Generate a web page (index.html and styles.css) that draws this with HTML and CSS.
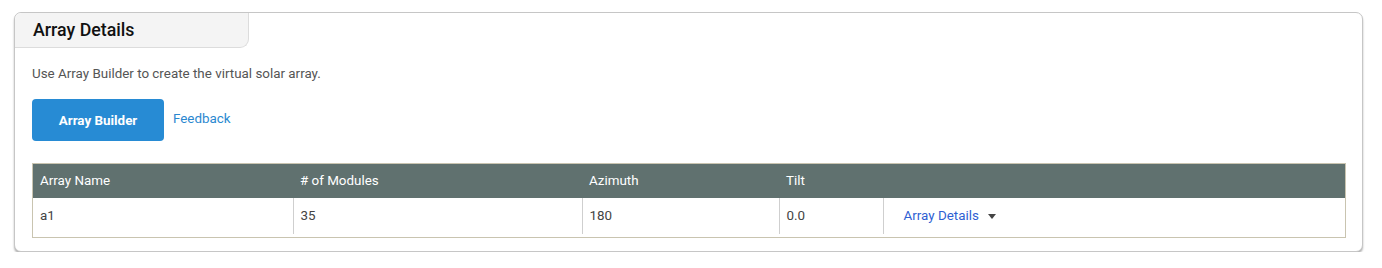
FILE: index.html
```html
<!DOCTYPE html>
<html>
<head>
<meta charset="utf-8">
<link rel="stylesheet" href="styles.css">
</head>
<body>
<div class="page">
  <section class="card">
    <div class="tab">Array Details</div>
    <div class="content">
      <p class="desc">Use Array Builder to create the virtual solar array.</p>
      <div class="actions">
        <button class="btn-primary">Array Builder</button>
        <a class="link" href="#">Feedback</a>
      </div>
      <div class="table-wrap">
        <table class="grid">
          <colgroup>
            <col class="c1"><col class="c2"><col class="c3"><col class="c4"><col class="c5">
          </colgroup>
          <thead>
            <tr><th>Array Name</th><th># of Modules</th><th>Azimuth</th><th>Tilt</th><th></th></tr>
          </thead>
          <tbody>
            <tr>
              <td>a1</td><td class="sep">35</td><td class="sep">180</td><td class="sep">0.0</td>
              <td class="sep action"><span class="dd">Array Details<span class="caret"></span></span></td>
            </tr>
          </tbody>
        </table>
      </div>
    </div>
  </section>
</div>
</body>
</html>
```

FILE: styles.css
```css
html, body { margin: 0; padding: 0; background: #fff; }
body { font-family: Roboto, "Liberation Sans", Arial, sans-serif; }
.page { padding: 12px 19px 0 14px; }
.card {
  border: 1px solid #c6c6c6;
  border-radius: 7px;
  box-shadow: 0 2px 2px rgba(0,0,0,0.3);
  height: 240px;
  box-sizing: border-box;
  background: #fff;
}
.tab {
  width: 234px;
  height: 35px;
  box-sizing: border-box;
  background: #f4f4f4;
  border-right: 1px solid #dcdcdc;
  border-bottom: 1px solid #dcdcdc;
  border-radius: 7px 0 9px 0;
  padding: 5px 0 0 18px;
  font-size: 17.8px;
  font-weight: 500;
  color: #111;
  line-height: 23px;
}
.content { padding: 17px 16px 0 17px; }
.desc {
  margin: 0;
  font-size: 13.4px;
  line-height: 18px;
  color: #555;
}
.actions {
  display: flex;
  align-items: center;
  margin-top: 16px;
  gap: 9px;
}
.btn-primary {
  width: 132px;
  height: 42px;
  background: #278bd4;
  color: #fff;
  border: none;
  border-radius: 4px;
  font-family: inherit;
  font-size: 13.4px;
  font-weight: 700;
  padding: 0;
}
.link {
  color: #2a88d0;
  font-size: 13.4px;
  text-decoration: none;
  margin-top: -3px;
}
.table-wrap {
  margin-top: 22px;
  border: 1px solid #c9c4b0;
  padding-bottom: 3px;
}
.grid {
  width: 100%;
  border-collapse: collapse;
  table-layout: fixed;
  font-size: 13.4px;
}
.c1 { width: 260px; }
.c2 { width: 289px; }
.c3 { width: 197px; }
.c4 { width: 104px; }
.grid th {
  background: #60716f;
  color: #fff;
  font-weight: 400;
  text-align: left;
  height: 34px;
  padding: 0 7px;
  line-height: 16px;
}
.grid td {
  height: 36px;
  padding: 0 7px;
  color: #444;
  line-height: 16px;
}
.grid td.sep { border-left: 1px solid #cfcfcf; }
.grid td.action { padding-left: 20px; }
.dd {
  color: #2f5fd3;
  display: inline-flex;
  align-items: center;
}
.caret {
  display: inline-block;
  width: 0; height: 0;
  margin-left: 9px;
  margin-top: 1px;
  border-left: 4.5px solid transparent;
  border-right: 4.5px solid transparent;
  border-top: 5px solid #444;
}
```
